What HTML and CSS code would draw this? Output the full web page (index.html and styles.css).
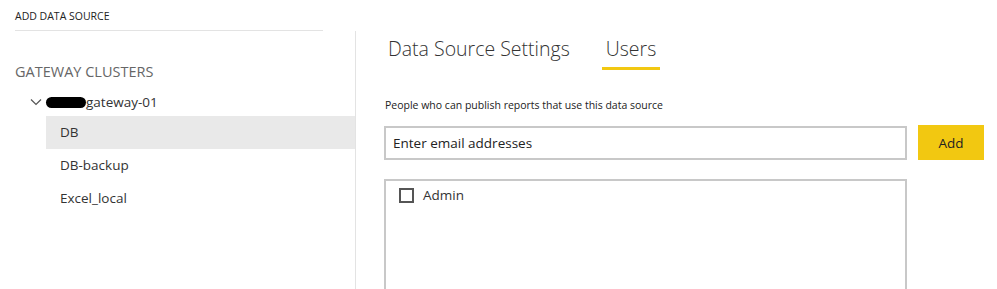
FILE: index.html
```html
<!DOCTYPE html>
<html lang="en">
<head>
    <meta charset="UTF-8">
    <title>Add Data Source</title>
    <link rel="stylesheet" href="styles.css">
</head>
<body>
    <div class="page">
        <aside class="sidebar">
            <div class="sidebar-head">ADD DATA SOURCE</div>
            <div class="sidebar-body">
                <h2 class="clusters-title">GATEWAY CLUSTERS</h2>
                <div class="cluster">
                    <svg class="chevron" width="12" height="8" viewBox="0 0 12 8">
                        <path d="M1 1.5 L6 6.5 L11 1.5" fill="none" stroke="#555" stroke-width="1.2"/>
                    </svg>
                    <span class="redacted"></span><span class="cluster-name">gateway-01</span>
                </div>
                <ul class="sources">
                    <li class="source active">DB</li>
                    <li class="source">DB-backup</li>
                    <li class="source">Excel_local</li>
                </ul>
            </div>
        </aside>
        <main class="content">
            <nav class="tabs">
                <span class="tab">Data Source Settings</span>
                <span class="tab selected">Users</span>
            </nav>
            <p class="hint">People who can publish reports that use this data source</p>
            <div class="add-row">
                <div class="email-input">Enter email addresses</div>
                <button class="add-btn">Add</button>
            </div>
            <div class="user-list">
                <label class="user">
                    <span class="checkbox"></span>
                    Admin
                </label>
            </div>
        </main>
    </div>
</body>
</html>
```

FILE: styles.css
```css
body {
    margin: 0;
    font-family: "Segoe UI", "Open Sans", "Noto Sans", sans-serif;
    color: #333;
    background: white;
    overflow: hidden;
}
.page {
    display: flex;
    height: 289px;
}
.sidebar {
    width: 356px;
    display: flex;
    flex-direction: column;
}
.sidebar-head {
    margin-left: 15px;
    width: 308px;
    font-size: 10.5px;
    line-height: 12px;
    padding-top: 10px;
    padding-bottom: 8px;
    border-bottom: 1px solid #e3e3e3;
    color: #222;
}
.sidebar-body {
    flex: 1;
    border-right: 1px solid #e3e3e3;
}
.clusters-title {
    margin: 31px 0 0 15px;
    font-size: 14.5px;
    font-weight: normal;
    color: #666;
    line-height: 20px;
}
.cluster {
    display: flex;
    align-items: center;
    height: 22px;
    margin-top: 9px;
    padding-left: 30px;
    font-size: 13.5px;
}
.chevron {
    margin-right: 4px;
}
.redacted {
    display: inline-block;
    width: 40px;
    height: 11px;
    background: #000;
    border-radius: 6px;
}
.sources {
    list-style: none;
    margin: 3px 0 0 46px;
    padding: 0;
}
.source {
    height: 33px;
    line-height: 33px;
    padding-left: 14px;
    font-size: 13.5px;
    color: #333;
}
.source.active {
    background: #e9e9e9;
}
.content {
    flex: 1;
    padding-left: 28px;
}
.tabs {
    display: flex;
    gap: 36px;
    margin-top: 35px;
    padding-left: 4px;
}
.tab {
    font-size: 19.5px;
    font-weight: 300;
    color: #333;
    line-height: 28px;
    padding-bottom: 4px;
}
.tab.selected {
    border-bottom: 3px solid #f2c811;
    padding: 0 4px 4px;
    margin-left: -4px;
}
.hint {
    margin: 28px 0 0 1px;
    font-size: 10.5px;
    color: #222;
    line-height: 14px;
}
.add-row {
    display: flex;
    align-items: center;
    gap: 11px;
    margin-top: 13px;
}
.email-input {
    box-sizing: border-box;
    width: 523px;
    flex-shrink: 0;
    height: 34px;
    line-height: 30px;
    border: 2px solid #c8c8c8;
    padding-left: 7px;
    font-size: 13.5px;
    color: #222;
}
.add-btn {
    width: 66px;
    height: 35px;
    border: none;
    background: #f2c811;
    font-family: inherit;
    font-size: 13.5px;
    color: #222;
}
.user-list {
    box-sizing: border-box;
    width: 523px;
    height: 110px;
    margin-top: 19px;
    border: 2px solid #c8c8c8;
    border-bottom: none;
}
.user {
    display: flex;
    align-items: center;
    gap: 9px;
    margin: 5px 0 0 13px;
    font-size: 13.5px;
    color: #333;
}
.checkbox {
    width: 11px;
    height: 11px;
    border: 2px solid #555;
}
```
